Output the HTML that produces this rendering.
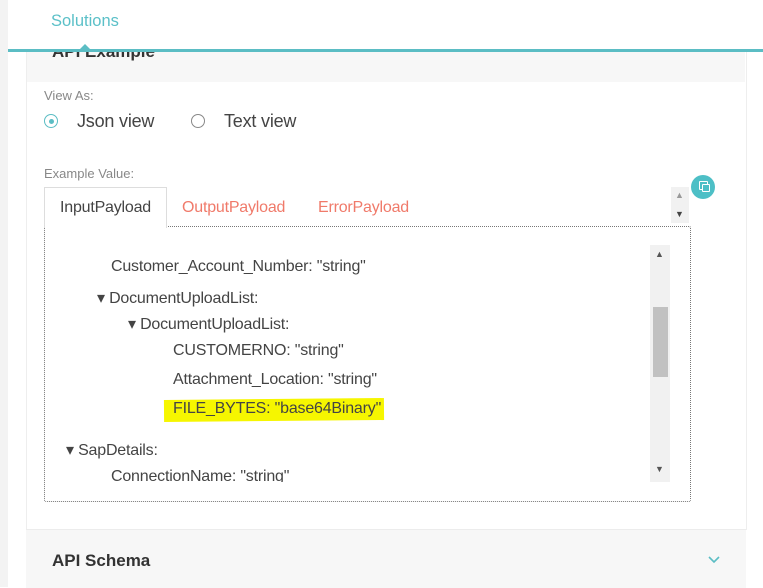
<!DOCTYPE html><html><head><style>
body{margin:0;width:763px;height:587px;overflow:hidden;background:#fff;font-family:"Liberation Sans",sans-serif;position:relative}
div,span{position:absolute}
.t{font-size:16px;color:#444;white-space:nowrap;letter-spacing:-0.2px}
</style></head><body>
<div style="left:0;top:0;width:8px;height:587px;background:#f3f3f3"></div>
<div style="left:26px;top:50px;width:719px;height:480px;border-left:1px solid #eee;border-right:1px solid #eee"></div>
<div style="left:27px;top:50px;width:718px;height:32px;background:#f7f7f7"></div>
<span style="left:52px;top:42px;font-size:17px;font-weight:bold;color:#333">API Example</span>
<div style="left:8px;top:0;width:755px;height:49px;background:#fff"></div>
<span style="left:51px;top:12px;font-size:16.5px;color:#5bc0c8">Solutions</span>
<div style="left:8px;top:49px;width:755px;height:3px;background:#5bbdc4"></div>
<div style="left:79px;top:44px;width:0;height:0;border-left:6px solid transparent;border-right:6px solid transparent;border-bottom:6px solid #5bbdc4"></div>
<span style="left:44px;top:88px;font-size:13px;color:#888">View As:</span>
<div style="left:44px;top:114px;width:12px;height:12px;border:1.5px solid #5bbdc4;border-radius:50%"></div>
<div style="left:49px;top:119px;width:5px;height:5px;background:#5bbdc4;border-radius:50%"></div>
<span class="t" style="left:77px;top:111px;font-size:18px">Json view</span>
<div style="left:191px;top:114px;width:12px;height:12px;border:1.5px solid #888;border-radius:50%"></div>
<span class="t" style="left:224px;top:111px;font-size:18px">Text view</span>
<span style="left:44px;top:166px;font-size:13px;color:#888">Example Value:</span>
<div style="left:44px;top:187px;width:121px;height:40px;border:1px solid #ddd;border-bottom:none;background:#fff;z-index:2"></div>
<span class="t" style="left:60px;top:199px;z-index:3">InputPayload</span>
<span class="t" style="left:182px;top:199px;color:#f07a6a">OutputPayload</span>
<span class="t" style="left:318px;top:199px;color:#f07a6a">ErrorPayload</span>
<div style="left:671px;top:187px;width:18px;height:36px;background:#f1f1f1"></div>
<span style="left:675px;top:190px;font-size:9px;color:#999">▲</span>
<span style="left:675px;top:209px;font-size:9px;color:#444">▼</span>
<div style="left:691px;top:175px;width:24px;height:24px;border-radius:50%;background:#4dbfc6"></div>
<div style="left:699px;top:181px;width:7px;height:7px;border:1.5px solid #fff;border-radius:1px"></div>
<div style="left:702px;top:184px;width:6px;height:6px;border:1.5px solid #fff;border-radius:1px;background:#4dbfc6"></div>
<div style="left:44px;top:226px;width:645px;height:274px;border:1px dotted #777;border-radius:2px"></div>
<div style="left:650px;top:245px;width:20px;height:237px;background:#f1f1f1"></div>
<div style="left:653px;top:307px;width:15px;height:70px;background:#c1c1c1"></div>
<span style="left:655px;top:249px;font-size:9px;color:#555">▲</span>
<span style="left:655px;top:464px;font-size:9px;color:#555">▼</span>
<span class="t" style="left:111px;top:258px">Customer_Account_Number: "string"</span>
<span class="t" style="left:97px;top:288px">▾ DocumentUploadList:</span>
<span class="t" style="left:128px;top:314px">▾ DocumentUploadList:</span>
<span class="t" style="left:173px;top:342px">CUSTOMERNO: "string"</span>
<span class="t" style="left:173px;top:371px">Attachment_Location: "string"</span>
<div style="left:164px;top:399px;width:220px;height:22px;background:#f6f600;transform:rotate(-0.5deg)"></div>
<span class="t" style="left:173px;top:400px">FILE_BYTES: "base64Binary"</span>
<span class="t" style="left:66px;top:440px">▾ SapDetails:</span>
<div style="left:45px;top:462px;width:600px;height:20px;overflow:hidden"><span class="t" style="left:66px;top:6px">ConnectionName: "string"</span></div>
<div style="left:26px;top:529px;width:720px;height:58px;background:#f7f7f7;border-top:1px solid #ececec"></div>
<span style="left:52px;top:551px;font-size:17px;font-weight:bold;color:#333">API Schema</span>
<svg style="position:absolute;left:708px;top:556px" width="12" height="8"><path d="M1 1L6 6L11 1" stroke="#5bbdc4" stroke-width="1.6" fill="none"/></svg>
</body></html>
